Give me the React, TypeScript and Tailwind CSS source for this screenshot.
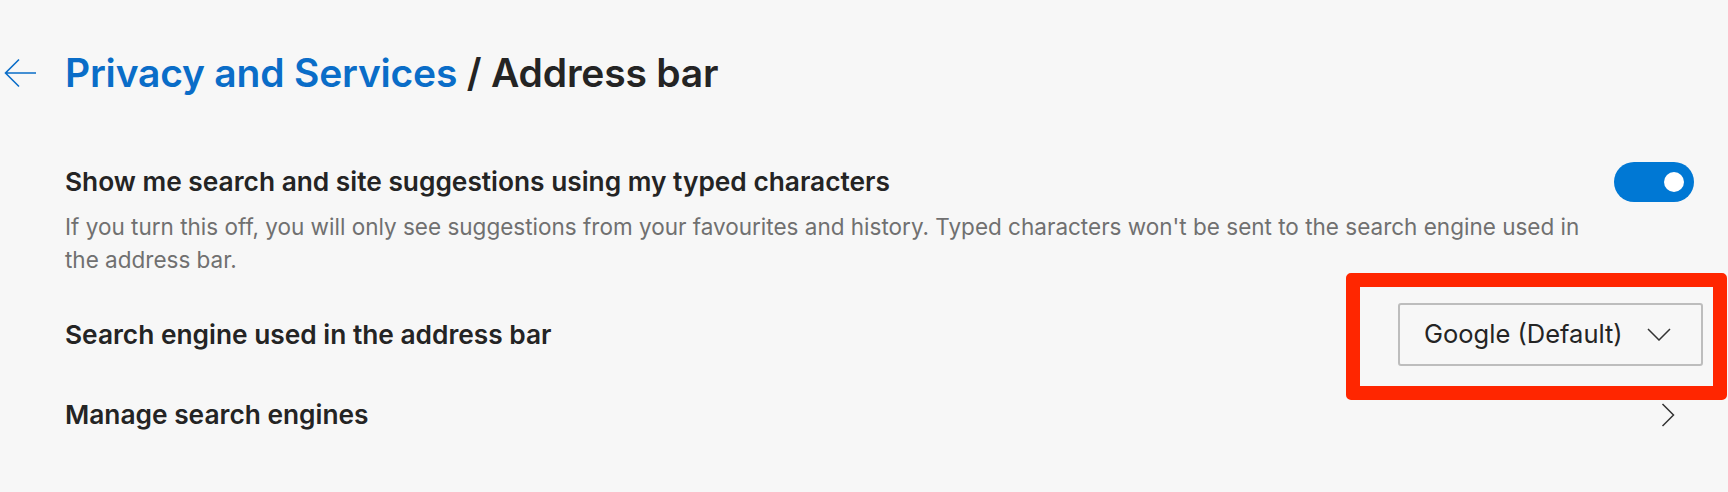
export default function App() {
  return (
    <div className="min-h-[492px] w-full bg-[#f7f7f7] font-['Inter',sans-serif] text-[#242424] pr-[25px]">
      {/* Header */}
      <div className="flex items-center pt-[49px] h-[97px]">
        <button className="w-[65px] pl-[4px] flex items-center" aria-label="Back">
          <svg width="33" height="30" viewBox="0 0 33 30" fill="none" stroke="#0a6dc8" strokeWidth="1.6">
            <path d="M32 15H1.5M15 1.5L1.5 15L15 28.5" />
          </svg>
        </button>
        <h1 className="text-[39px] leading-[48px] font-semibold tracking-[-0.2px]">
          <span className="text-[#0a6dc8]">Privacy and Services</span>
          <span className="text-[#242424]"> / Address bar</span>
        </h1>
      </div>

      <div className="pl-[65px]">
        {/* Row 1 */}
        <div className="flex items-start justify-between mt-[69px]">
          <div className="max-w-[1530px]">
            <div className="text-[26.3px] leading-[32px] font-semibold">
              Show me search and site suggestions using my typed characters
            </div>
            <p className="mt-[12px] text-[22.5px] leading-[33px] text-[#707070]">
              If you turn this off, you will only see suggestions from your favourites and history. Typed characters won't be sent to the search engine used in the address bar.
            </p>
          </div>
          <div className="mr-[9px] mt-[-4px] w-[80px] h-[40px] rounded-full bg-[#0078d4] flex items-center justify-end pr-[10px] shrink-0">
            <div className="w-[20px] h-[20px] rounded-full bg-white" />
          </div>
        </div>

        {/* Row 2 */}
        <div className="flex items-center justify-between h-[63px] mt-[27px]">
          <div className="text-[26.3px] leading-[32px] font-semibold">Search engine used in the address bar</div>
          <div className="relative">
            <div className="w-[305px] h-[63px] border-2 border-[#bdbdbd] rounded-[3px] flex items-center justify-between pl-[24px] pr-[30px]">
              <span className="text-[25.5px] text-[#242424]">Google (Default)</span>
              <svg width="24" height="13" viewBox="0 0 24 13" fill="none" stroke="#333" strokeWidth="1.5">
                <path d="M1 1L12 12L23 1" />
              </svg>
            </div>
            <div className="absolute left-[-52px] right-[-24px] top-[-30px] bottom-[-34px] border-[14px] border-[#ff2600] rounded-[5px] pointer-events-none" />
          </div>
        </div>

        {/* Row 3 */}
        <div className="flex items-center justify-between h-[32px] mt-[33px]">
          <div className="text-[26.3px] leading-[32px] font-semibold">Manage search engines</div>
          <svg className="mr-[28px]" width="14" height="24" viewBox="0 0 14 24" fill="none" stroke="#333" strokeWidth="1.5">
            <path d="M1.5 1L12.5 12L1.5 23" />
          </svg>
        </div>
      </div>
    </div>
  );
}
